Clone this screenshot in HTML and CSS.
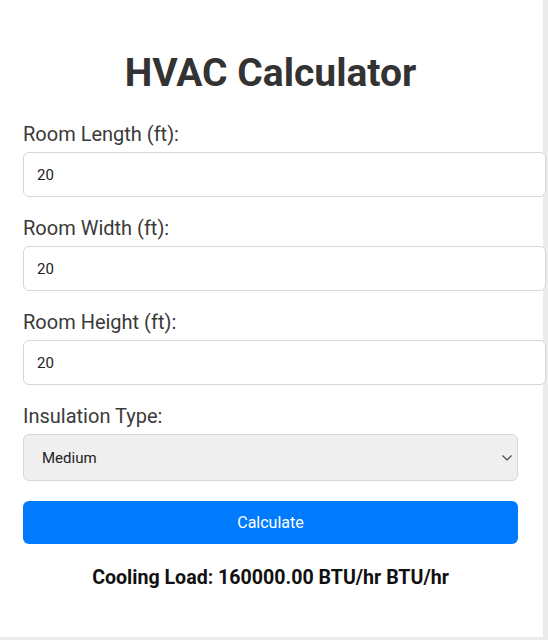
FILE: index.html
```html
<!DOCTYPE html>
<html>

<head>
    <title>HVAC Calculator</title>

    <link rel="stylesheet" href="styles.css">
</head>

<body>
    <div class="container">
        <h1>HVAC Calculator</h1>

        <label for="length">Room Length (ft):</label>
        <input type="number" id="length" value="20">

        <label for="width">Room Width (ft):</label>
        <input type="number" id="width" value="20">

        <label for="height">Room Height (ft):</label>
        <input type="number" id="height" value="20">

        <label for="insulation">Insulation Type:</label>
        <select id="insulation">
            <option value="poor">Poor</option>
            <option value="medium" selected>Medium</option>
            <option value="good">Good</option>
        </select>

        <button>Calculate</button>

        <div class="result">Cooling Load: 160000.00 BTU/hr BTU/hr</div>
    </div>
</body>

</html>
```

FILE: styles.css
```css
body {
    margin: 0;
    background-color: #ebebeb;
    font-family: Roboto, "Liberation Sans", sans-serif;
}

.container {
    width: 495px;
    padding: 50px 25px 47px 23px;
    background-color: #fff;
}

h1 {
    text-align: center;
    font-size: 39px;
    color: #333;
    margin: 0 0 27px 0;
    line-height: 46px;
}

label {
    display: block;
    font-size: 20px;
    line-height: 23px;
    color: #3a3a3a;
    margin-bottom: 6px;
}

input {
    display: block;
    width: 100%;
    height: 43px;
    padding: 0 13px;
    margin-bottom: 20px;
    font-family: Roboto, sans-serif;
    font-size: 15px;
    color: #222;
    border: 1px solid #d6d6d6;
    border-radius: 6px;
}

select {
    display: block;
    width: 100%;
    height: 47px;
    padding: 0 18px;
    margin-bottom: 20px;
    font-family: Roboto, sans-serif;
    font-size: 15px;
    color: #222;
    appearance: none;
    background-color: #efefef;
    background-image: url("data:image/svg+xml,%3Csvg xmlns='http://www.w3.org/2000/svg' width='12' height='8' viewBox='0 0 12 8'%3E%3Cpath d='M1.5 1.5 L6 6 L10.5 1.5' fill='none' stroke='%23444' stroke-width='1.2'/%3E%3C/svg%3E");
    background-repeat: no-repeat;
    background-position: right 4px center;
    border: 1px solid #d8d8d8;
    border-radius: 6px;
}

button {
    display: block;
    width: 100%;
    height: 43px;
    font-family: Roboto, sans-serif;
    font-size: 16px;
    color: #fff;
    background-color: #007bff;
    border: none;
    border-radius: 6px;
}

.result {
    text-align: center;
    font-size: 19.6px;
    font-weight: bold;
    color: #111;
    margin-top: 22px;
    line-height: 24px;
}
```
